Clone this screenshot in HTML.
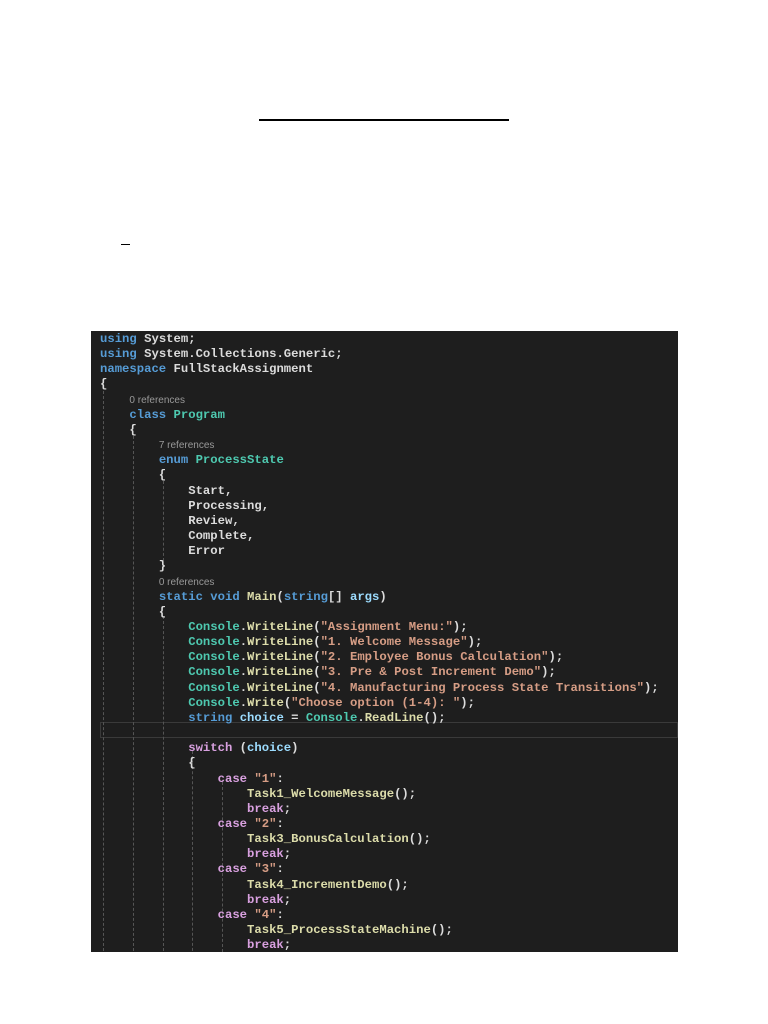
<!DOCTYPE html>
<html><head><meta charset="utf-8"><style>
body{margin:0;width:768px;height:1024px;background:#fff;position:relative;overflow:hidden}
.code{position:absolute;left:91px;top:331px;width:587px;height:621px;background:#1e1e1e;overflow:hidden}
pre{position:absolute;left:9px;top:1px;margin:0;font-family:"Liberation Mono",monospace;font-size:12.25px;line-height:15.15px;color:#dcdcdc;font-weight:bold;letter-spacing:0}
.k{color:#569cd6}.t{color:#4ec9b0}.m{color:#dcdcaa}.s{color:#d69d85}.v{color:#9cdcfe}.p{color:#d8a0df}
.r{font-family:"Liberation Sans",sans-serif;font-size:10px;color:#999;font-weight:normal}
.g{position:absolute;border-left:1px dashed #555;width:0}
.hl{position:absolute;left:9px;right:0;top:391px;height:14px;border:1px solid #3a3a3a}
</style></head><body>
<div style="position:absolute;left:259px;top:119px;width:250px;height:2px;background:#000"></div>
<div style="position:absolute;left:121px;top:244px;width:9px;height:1px;background:#000"></div>
<div class="code">
<div class="hl"></div>
<div class="g" style="left:12px;top:60px;height:570px"></div>
<div class="g" style="left:42px;top:105px;height:520px"></div>
<div class="g" style="left:72px;top:150px;height:80px"></div>
<div class="g" style="left:72px;top:285px;height:340px"></div>
<div class="g" style="left:101px;top:420px;height:210px"></div>
<div class="g" style="left:131px;top:451px;height:170px"></div>
<pre><span class="k">using</span> System;
<span class="k">using</span> System.Collections.Generic;
<span class="k">namespace</span> FullStackAssignment
{
    <span class="r">0 references</span>
    <span class="k">class</span> <span class="t">Program</span>
    {
        <span class="r">7 references</span>
        <span class="k">enum</span> <span class="t">ProcessState</span>
        {
            Start,
            Processing,
            Review,
            Complete,
            Error
        }
        <span class="r">0 references</span>
        <span class="k">static</span> <span class="k">void</span> <span class="m">Main</span>(<span class="k">string</span>[] <span class="v">args</span>)
        {
            <span class="t">Console</span>.<span class="m">WriteLine</span>(<span class="s">"Assignment Menu:"</span>);
            <span class="t">Console</span>.<span class="m">WriteLine</span>(<span class="s">"1. Welcome Message"</span>);
            <span class="t">Console</span>.<span class="m">WriteLine</span>(<span class="s">"2. Employee Bonus Calculation"</span>);
            <span class="t">Console</span>.<span class="m">WriteLine</span>(<span class="s">"3. Pre &amp; Post Increment Demo"</span>);
            <span class="t">Console</span>.<span class="m">WriteLine</span>(<span class="s">"4. Manufacturing Process State Transitions"</span>);
            <span class="t">Console</span>.<span class="m">Write</span>(<span class="s">"Choose option (1-4): "</span>);
            <span class="k">string</span> <span class="v">choice</span> = <span class="t">Console</span>.<span class="m">ReadLine</span>();

            <span class="p">switch</span> (<span class="v">choice</span>)
            {
                <span class="p">case</span> <span class="s">"1"</span>:
                    <span class="m">Task1_WelcomeMessage</span>();
                    <span class="p">break</span>;
                <span class="p">case</span> <span class="s">"2"</span>:
                    <span class="m">Task3_BonusCalculation</span>();
                    <span class="p">break</span>;
                <span class="p">case</span> <span class="s">"3"</span>:
                    <span class="m">Task4_IncrementDemo</span>();
                    <span class="p">break</span>;
                <span class="p">case</span> <span class="s">"4"</span>:
                    <span class="m">Task5_ProcessStateMachine</span>();
                    <span class="p">break</span>;
</pre>
</div>
</body></html>
